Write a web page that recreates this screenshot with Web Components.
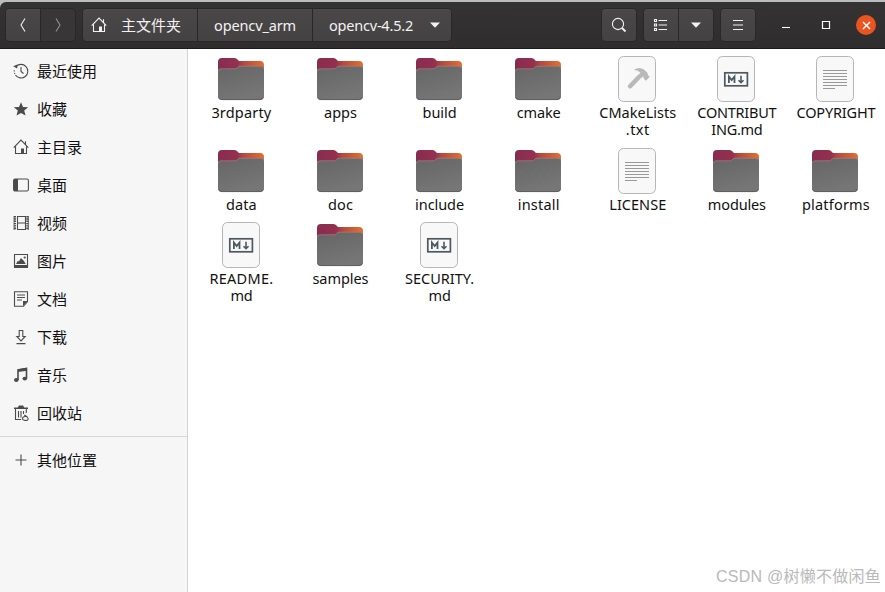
<!DOCTYPE html>
<html lang="zh-CN">
<head>
<meta charset="UTF-8">
<title>opencv-4.5.2</title>
<style>
	body {
		margin: 0;
		height: 592px;
		overflow: hidden;
		font-family: "Noto Sans", "Noto Sans CJK SC", sans-serif;
		background: #fff;
	}
</style>
</head>
<body>
<file-window></file-window>

<script>
// symbolic icons, all on a 16x16 grid
const ICONS = {
	back: '<path d="M10 1.5 6 8l4 6.5"/>',
	next: '<path d="M6 1.5 10 8l-4 6.5"/>',
	home: '<path d="M.7 8.6 8 1l7.3 7.6M2.5 7.5v7h11v-7M12.5 5.5V2.2"/><path class="fill" d="M8 9.5h3v5H8z"/>',
	down: '<path class="fill" d="M3 5.5h10L8 10.7z"/>',
	search: '<circle cx="7" cy="7" r="5.6"/><path stroke-width="1.8" d="m11 11 3.5 3.5"/>',
	list: '<path d="M1.5 2.5h2v2h-2zM1.5 7h2v2h-2zM1.5 11.5h2v2h-2zM5.5 3.5h8.5M5.5 8h8.5M5.5 12.5h8.5"/>',
	menu: '<path d="M3 3.5h10M3 8h10M3 12.5h10"/>',
	minimize: '<path d="M4 10.5h8"/>',
	maximize: '<path stroke-width="1.2" d="M4.5 4.5h7v7h-7z"/>',
	close: '<path stroke-width="1.5" d="m4.2 4.2 7.6 7.6m0-7.6-7.6 7.6"/>',
	recent: '<path d="M3 3.6A6.8 6.8 0 1 1 2.4 12M8 4v4.5l2.5 2"/><path class="fill" d="M.2 3.2 4.400 1.600 4.200 5.400z"/><path stroke-dasharray="1.2 1.3" d="M1.300 7.200q-.2 2.500 1 4.500"/>',
	star: '<path class="fill" d="m8 1.2 2 4.7 5.2.4-4 3.3 1.3 5L8 11.9l-4.5 2.7 1.3-5-4-3.3L6 5.9z"/>',
	desktop: '<rect x=".6" y="2" width="14.8" height="12" rx="1.6"/><path class="fill" d="M1.5 2H5v12H1.5l-1-1V3z"/>',
	video: '<path d="M4.5 1.5h8v13h-8zM4.5 8h8"/><path stroke-width="2" stroke-dasharray="1.4 .9" d="M2 1v14M14.3 1v14"/><path stroke-width=".8" d="M1 1v14M15.4 1v14"/>',
	picture: '<path d="M1.5 1.5h13v12h-13z"/><path class="fill" d="M1 12h14v3H1zM3 11l1.8-3.3 1 .8L8 5l3 3 1.7 3z"/><circle class="fill" cx="11.7" cy="4.5" r="1.1"/>',
	document: '<path d="M1.5.7h13v9.8l-4 4.8h-9zM4 4h8M4 6.5h8M4 9h5"/><path class="fill" d="M10 10h4.5L10 15.3z"/>',
	download: '<path d="M6.2 1.5h3.6v6h2.4L8 12 3.8 7.5h2.4zM3.5 14.6h9"/>',
	music: '<path stroke-width="1.6" d="M5 13V3l8.5-1.6v10"/><path class="fill" d="M5 2.3 14 .8v3L5 5z"/><ellipse class="fill" cx="3.3" cy="13" rx="2.3" ry="1.9"/><ellipse class="fill" cx="11.8" cy="11.6" rx="2.3" ry="1.9"/>',
	trash: '<path class="fill" d="M1 4V2.6h3.7L6 .6h4l1.3 2H15V4z"/><path d="M2.5 4v10.5h5.7M5.5 6v6.5M8 6v6.5M10.5 6v3M13.3 4v4"/><path d="M10 14.6c-1.4-1.6.5-3.1 2.3-3.1l-.8-1.5 2.7 2c1.8 2 .6 3.5-1 3.5-1.4 0-2.3-.2-3.2-.9z"/>',
	plus: '<path d="M8 2.5v11M2.5 8h11"/>'
};

const FILE_ART = {
	folder: `
		<defs>
			<linearGradient id="tab"><stop stop-color="#872c50"/><stop offset=".42" stop-color="#95304f"/><stop offset=".55" stop-color="#b3483f"/><stop offset="1" stop-color="#e4702f"/></linearGradient>
			<linearGradient id="front" x2=".4" y2="1"><stop stop-color="#656565"/><stop offset="1" stop-color="#767676"/></linearGradient>
		</defs>
		<path fill="url(#tab)" d="M1 15V7q0-4 4-4h12.5q2 0 3 1.5 1 1.500 2.500 1.500h20q4 0 4 4v10H1z"/>
		<path fill="url(#front)" d="M1 16.5q0-2.7 2.5-2.7h14.5q1.5 0 2.5-1.3t2.5-1.3h21q3 0 3 2.5V41q0 4-4 4H5q-4 0-4-4z"/>
		<path fill="none" stroke="#a08286" stroke-width=".7" d="M1.3 16.5q0-2.7 2.5-2.7h14.2q1.5 0 2.5-1.3t2.5-1.3h21q2.7 0 2.7 2.5"/>
		<path fill="none" stroke="#585858" stroke-width=".8" d="M1.5 42q.8 2.6 3.5 2.6h38q2.7 0 3.5-2.6"/>`,
	build: `
		<g transform="rotate(44 25 23)" fill="#b9b9b9">
			<rect x="22.8" y="20" width="4.4" height="16.5" rx="1.8"/>
			<path d="M23 21v-3.500q-3-.3-6.500 2.700 1-6.700 7-7.400h5l1.500 1.200h2.700v5.500H30l-2.500-1.300V21z"/>
		</g>`,
	text: '<path stroke="#999" fill="none" d="M12 15.5h24M12 18.5h24M12 21.5h24M12 24.5h24M12 27.5h24M12 30.5h24M12 33.5h12"/>',
	markdown: `
		<rect x="12.8" y="17.8" width="22.6" height="13" fill="none" stroke="#4d5960" stroke-width="1.7"/>
		<path stroke="#4d5960" stroke-width="1.8" fill="none" d="M16.9 28v-6.5l2.8 3.5 2.8-3.5V28"/>
		<path stroke="#4d5960" stroke-width="1.6" fill="none" d="M29 20.8v6M26.5 25.2l2.5 2.5 2.5-2.5"/>`
};

class UiIcon extends HTMLElement {
	constructor() {
		super();
		this.attachShadow({ mode: "open" });
		this.shadowRoot.append(UiIcon.template.content.cloneNode(true));
	}

	static get observedAttributes() {
		return ["name"];
	}

	attributeChangedCallback(name, oldValue, newValue) {
		this.shadowRoot.querySelector("svg").innerHTML = ICONS[newValue];
	}
}

UiIcon.template = document.createElement("template");
UiIcon.template.innerHTML = `
<style>
	:host { display: block; width: 16px; height: 16px; flex: none; }
	svg { display: block; width: 100%; height: 100%; fill: none; stroke: currentColor; stroke-width: 1.1; }
	.fill { fill: currentColor; stroke: none; }
</style>
<svg viewBox="0 0 16 16"></svg>
`;
customElements.define("ui-icon", UiIcon);


class HeaderButton extends HTMLElement {
	constructor() {
		super();
		this.attachShadow({ mode: "open" });
		this.shadowRoot.append(HeaderButton.template.content.cloneNode(true));
	}
}

HeaderButton.template = document.createElement("template");
HeaderButton.template.innerHTML = `
<style>
	:host {
		display: flex;
		align-items: center;
		justify-content: center;
		box-sizing: border-box;
		width: 34px;
		height: 32px;
		background: linear-gradient(#4a4748, #454243);
		box-shadow: 0 0 0 1px #292728, inset 0 1px #4f4c4d;
		border-radius: var(--corners, 4px);
		color: #f2f2f2;
		font-size: 14.5px;
		line-height: 20px;
		white-space: nowrap;
	}
	:host([disabled]) { background: #393637; box-shadow: 0 0 0 1px #292728; color: #929091; }
	::slotted(fit-text) { margin-top: -1px; }
</style>
<slot></slot>
`;
customElements.define("header-button", HeaderButton);


class HeaderBar extends HTMLElement {
	constructor() {
		super();
		this.attachShadow({ mode: "open" });
		this.shadowRoot.append(HeaderBar.template.content.cloneNode(true));
	}
}

HeaderBar.template = document.createElement("template");
HeaderBar.template.innerHTML = `
<style>
	:host {
		display: block;
		box-sizing: border-box;
		height: 49px;
		padding-top: 2px;
		background: #b9bdbc;
	}
	header {
		display: flex;
		align-items: flex-start;
		box-sizing: border-box;
		height: 47px;
		padding: 7px 9px 0 6px;
		gap: 8px;
		background: linear-gradient(#353233, #302d2e);
		border-bottom: 1px solid #1c1a1b;
		border-radius: 6px 0 0 0;
	}
	.group { display: flex; gap: 1px; }
	.group > :first-child { --corners: 4px 0 0 4px; }
	.group > :last-child { --corners: 0 4px 4px 0; }
	.path > * { --corners: 0; }
	.home { width: 114px; justify-content: flex-start; padding-left: 8px; gap: 14px; font-size: 15px; }
	.parent { width: 114px; }
	.current { width: 138px; justify-content: flex-start; padding-left: 16px; gap: 14px; }
	.spacer { flex: 1; }
	.controls { display: flex; align-items: center; height: 32px; margin-left: 15px; gap: 24px; color: #fff; }
	.close {
		display: flex;
		align-items: center;
		justify-content: center;
		width: 20px;
		height: 20px;
		margin-left: -2px;
		border-radius: 50%;
		background: #e95420;
	}
	.close ui-icon { width: 15px; height: 15px; }
</style>
<header>
	<div class="group">
		<header-button><ui-icon name="back"></ui-icon></header-button>
		<header-button disabled><ui-icon name="next"></ui-icon></header-button>
	</div>
	<div class="group path">
		<header-button class="home"><ui-icon name="home"></ui-icon><fit-text width="60">主文件夹</fit-text></header-button>
		<header-button class="parent"><fit-text width="82">opencv_arm</fit-text></header-button>
		<header-button class="current"><fit-text width="84">opencv-4.5.2</fit-text><ui-icon name="down"></ui-icon></header-button>
	</div>
	<div class="spacer"></div>
	<header-button><ui-icon name="search"></ui-icon></header-button>
	<div class="group">
		<header-button><ui-icon name="list"></ui-icon></header-button>
		<header-button><ui-icon name="down"></ui-icon></header-button>
	</div>
	<header-button><ui-icon name="menu"></ui-icon></header-button>
	<div class="controls">
		<ui-icon name="minimize"></ui-icon>
		<ui-icon name="maximize"></ui-icon>
		<div class="close"><ui-icon name="close"></ui-icon></div>
	</div>
</header>
`;


// one line of text, tracked so that it takes the given width
class FitText extends HTMLElement {
	constructor() {
		super();
		this.attachShadow({ mode: "open" });
		this.shadowRoot.append(FitText.template.content.cloneNode(true));
	}

	connectedCallback() {
		const span = this.shadowRoot.querySelector("span");
		const diff = Number(this.getAttribute("width")) - span.getBoundingClientRect().width;
		const spacing = diff / this.textContent.length;
		span.style.letterSpacing = spacing + "px";
	}
}

FitText.template = document.createElement("template");
FitText.template.innerHTML = `
<style>
	:host { display: block; white-space: nowrap; }
</style>
<span><slot></slot></span>
`;


class PlaceItem extends HTMLElement {
	constructor() {
		super();
		this.attachShadow({ mode: "open" });
		this.shadowRoot.append(PlaceItem.template.content.cloneNode(true));
	}

	connectedCallback() {
		this.shadowRoot.querySelector("ui-icon").setAttribute("name", this.getAttribute("icon"));
	}
}

PlaceItem.template = document.createElement("template");
PlaceItem.template.innerHTML = `
<style>
	:host {
		display: flex;
		align-items: center;
		gap: 8px;
		height: 38px;
		padding-left: 13px;
		color: #111;
		font-size: 15px;
		line-height: 20px;
	}
	ui-icon { color: #4b4b4b; }
</style>
<ui-icon></ui-icon>
<span><slot></slot></span>
`;
customElements.define("place-item", PlaceItem);


class FileItem extends HTMLElement {
	constructor() {
		super();
		this.attachShadow({ mode: "open" });
		this.shadowRoot.append(FileItem.template.content.cloneNode(true));
	}

	connectedCallback() {
		const type = this.getAttribute("type");
		const page = '<rect x="5.5" y="1.5" width="37" height="45" rx="5" fill="#f8f8f8" stroke="#b6b6b6"/>';
		this.shadowRoot.querySelector("svg").innerHTML = (type === "folder" ? "" : page) + FILE_ART[type];
	}
}

FileItem.template = document.createElement("template");
FileItem.template.innerHTML = `
<style>
	:host {
		display: flex;
		flex-direction: column;
		align-items: center;
		color: #111;
		font-size: 14.5px;
		line-height: 17px;
	}
	svg { display: block; width: 48px; height: 48px; margin-bottom: 1px; }
	::slotted(fit-text) { padding-left: 1px; }
</style>
<svg viewBox="0 0 48 48"></svg>
<slot></slot>
`;
customElements.define("file-item", FileItem);


class FileWindow extends HTMLElement {
	constructor() {
		super();
		this.attachShadow({ mode: "open" });
		this.shadowRoot.append(FileWindow.template.content.cloneNode(true));
	}
}

FileWindow.template = document.createElement("template");
FileWindow.template.innerHTML = `
<style>
	:host { display: flex; flex-direction: column; position: relative; height: 592px; }
	.content { display: flex; flex: 1; }
	nav {
		flex: none;
		box-sizing: border-box;
		width: 188px;
		padding-top: 3px;
		background: #f6f6f6;
		border-right: 1px solid #d3d3d3;
	}
	hr { margin: 4px 0; border: 0; border-top: 1px solid #d8d8d8; }
	main {
		display: grid;
		grid-template-columns: repeat(7, 99.1px);
		grid-template-rows: 92px 74px 92px;
		align-content: start;
		padding: 6px 0 0 3.35px;
	}
	.mark {
		position: absolute;
		right: 4px;
		bottom: 4px;
		color: #b9b9b9;
		font: 16px/22px "Liberation Sans", "Noto Sans CJK SC", sans-serif;
	}
</style>
<header-bar></header-bar>
<div class="content">
	<nav>
		<place-item icon="recent">最近使用</place-item>
		<place-item icon="star">收藏</place-item>
		<place-item icon="home">主目录</place-item>
		<place-item icon="desktop">桌面</place-item>
		<place-item icon="video">视频</place-item>
		<place-item icon="picture">图片</place-item>
		<place-item icon="document">文档</place-item>
		<place-item icon="download">下载</place-item>
		<place-item icon="music">音乐</place-item>
		<place-item icon="trash">回收站</place-item>
		<hr>
		<place-item icon="plus">其他位置</place-item>
	</nav>
	<main>
		<file-item type="folder"><fit-text width="60">3rdparty</fit-text></file-item>
		<file-item type="folder"><fit-text width="33">apps</fit-text></file-item>
		<file-item type="folder"><fit-text width="34">build</fit-text></file-item>
		<file-item type="folder"><fit-text width="44">cmake</fit-text></file-item>
		<file-item type="build"><fit-text width="77">CMakeLists</fit-text><fit-text width="24">.txt</fit-text></file-item>
		<file-item type="markdown"><fit-text width="79">CONTRIBUT</fit-text><fit-text width="51">ING.md</fit-text></file-item>
		<file-item type="text"><fit-text width="79">COPYRIGHT</fit-text></file-item>
		<file-item type="folder"><fit-text width="31">data</fit-text></file-item>
		<file-item type="folder"><fit-text width="25">doc</fit-text></file-item>
		<file-item type="folder"><fit-text width="49">include</fit-text></file-item>
		<file-item type="folder"><fit-text width="42">install</fit-text></file-item>
		<file-item type="text"><fit-text width="57">LICENSE</fit-text></file-item>
		<file-item type="folder"><fit-text width="58">modules</fit-text></file-item>
		<file-item type="folder"><fit-text width="68">platforms</fit-text></file-item>
		<file-item type="markdown"><fit-text width="64">README.</fit-text><fit-text width="22">md</fit-text></file-item>
		<file-item type="folder"><fit-text width="56">samples</fit-text></file-item>
		<file-item type="markdown"><fit-text width="69">SECURITY.</fit-text><fit-text width="22">md</fit-text></file-item>
	</main>
</div>
<div class="mark"><fit-text width="165">CSDN @树懒不做闲鱼</fit-text></div>
`;
customElements.define("header-bar", HeaderBar);
customElements.define("file-window", FileWindow);
// last, once the labels stand in the page and can be measured
customElements.define("fit-text", FitText);
</script>
</body>
</html>
